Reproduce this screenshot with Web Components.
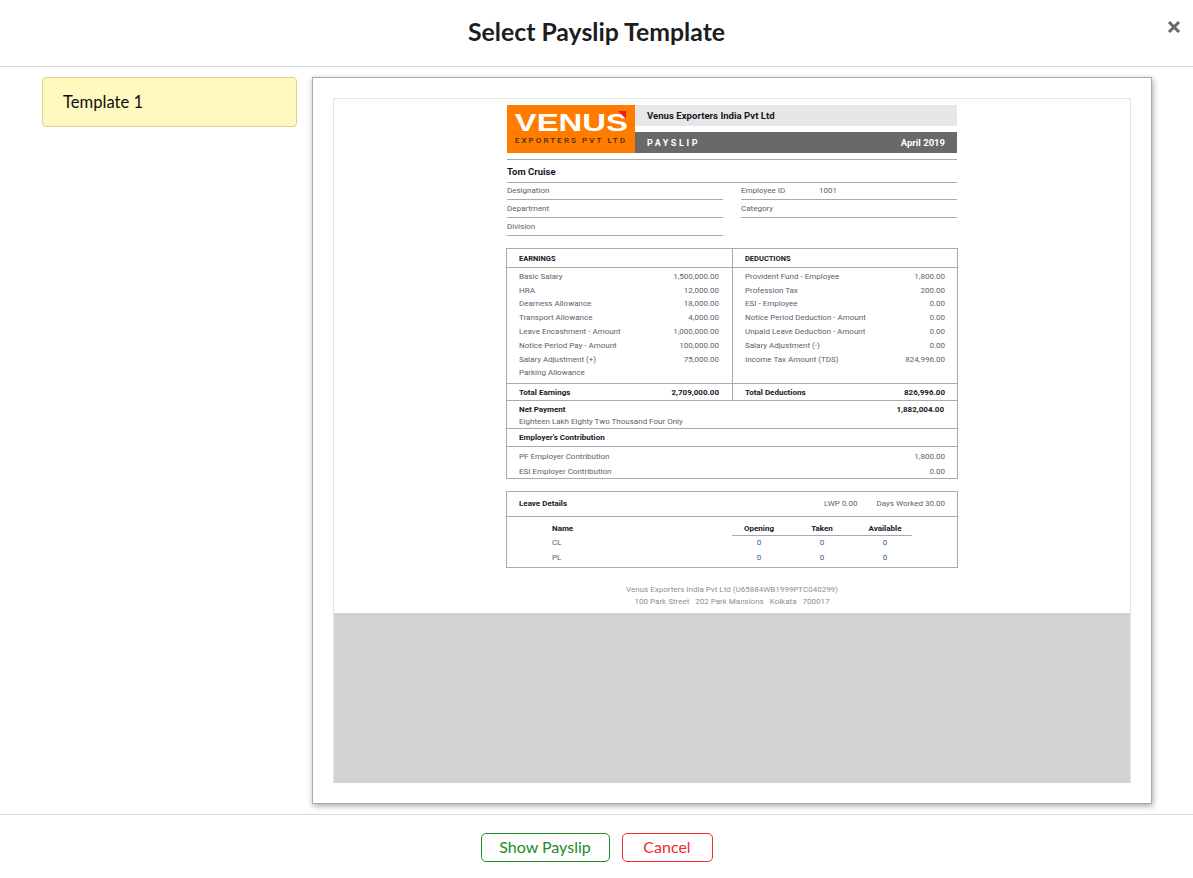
<!DOCTYPE html>
<html>
<head>
<meta charset="utf-8">
<title>Select Payslip Template</title>
<style>
    html, body { margin: 0; padding: 0; background: #fff; }
    body { font-family: Lato, "Liberation Sans", sans-serif; }
</style>
</head>
<body>
<template-dialog>
    <span slot="title">Select Payslip Template</span>
    <template-item slot="list">Template 1</template-item>
    <payslip-preview slot="preview"></payslip-preview>
    <dialog-button slot="actions" kind="ok">Show Payslip</dialog-button>
    <dialog-button slot="actions" kind="cancel">Cancel</dialog-button>
</template-dialog>

<script>
const dialogTemplate = document.createElement('template');
dialogTemplate.innerHTML = `
    <style>
        :host { display: flex; flex-direction: column; width: 1193px; height: 878px; overflow: hidden; }
        header {
            position: relative;
            display: flex;
            align-items: center;
            justify-content: center;
            height: 67px;
            padding-bottom: 3px;
            border-bottom: 1px solid #d6dbe1;
            font-size: 24.8px;
            font-weight: 700;
            color: #1d1d1d;
            box-sizing: border-box;
        }
        .close { position: absolute; top: 20px; right: 12px; width: 14px; height: 14px; }
        main {
            display: flex;
            align-items: flex-start;
            gap: 15px;
            height: 748px;
            padding: 10px 41px 0 42px;
            box-sizing: border-box;
            border-bottom: 1px solid #d6dbe1;
        }
        footer { display: flex; justify-content: center; gap: 12px; padding-top: 18px; }
    </style>
    <header>
        <slot name="title"></slot>
        <svg class="close" viewBox="0 0 14 14"><path d="M2 2 L12 12 M12 2 L2 12" stroke="#666" stroke-width="3" fill="none"/></svg>
    </header>
    <main>
        <slot name="list"></slot>
        <slot name="preview"></slot>
    </main>
    <footer><slot name="actions"></slot></footer>
`;

class TemplateDialog extends HTMLElement {
    constructor() {
        super();
        this.attachShadow({ mode: 'open' });
        this.shadowRoot.appendChild(dialogTemplate.content.cloneNode(true));
    }
}

const itemTemplate = document.createElement('template');
itemTemplate.innerHTML = `
    <style>
        :host {
            display: flex;
            align-items: center;
            box-sizing: border-box;
            width: 255px;
            height: 50px;
            padding: 0 0 0 20px;
            background: #fff9c0;
            border: 1px solid #e5cb8e;
            border-radius: 4px;
            font-size: 16.6px;
            color: #111;
        }
    </style>
    <slot></slot>
`;

class TemplateItem extends HTMLElement {
    constructor() {
        super();
        this.attachShadow({ mode: 'open' });
        this.shadowRoot.appendChild(itemTemplate.content.cloneNode(true));
    }
}

const buttonTemplate = document.createElement('template');
buttonTemplate.innerHTML = `
    <style>
        :host {
            display: flex;
            align-items: center;
            justify-content: center;
            box-sizing: border-box;
            height: 29px;
            padding-bottom: 2px;
            border: 1px solid currentColor;
            border-radius: 5px;
            font-size: 16px;
            background: #fff;
        }
        :host([kind="ok"]) { width: 129px; color: #228b22; }
        :host([kind="cancel"]) { width: 91px; color: #f42a2a; }
    </style>
    <slot></slot>
`;

class DialogButton extends HTMLElement {
    constructor() {
        super();
        this.attachShadow({ mode: 'open' });
        this.shadowRoot.appendChild(buttonTemplate.content.cloneNode(true));
    }
}

const earnings = [
    ['Basic Salary', '1,500,000.00'], ['HRA', '12,000.00'], ['Dearness Allowance', '18,000.00'],
    ['Transport Allowance', '4,000.00'], ['Leave Encashment - Amount', '1,000,000.00'],
    ['Notice Period Pay - Amount', '100,000.00'], ['Salary Adjustment (+)', '75,000.00'], ['Parking Allowance', '']
];
const deductions = [
    ['Provident Fund - Employee', '1,800.00'], ['Profession Tax', '200.00'], ['ESI - Employee', '0.00'],
    ['Notice Period Deduction - Amount', '0.00'], ['Unpaid Leave Deduction - Amount', '0.00'],
    ['Salary Adjustment (-)', '0.00'], ['Income Tax Amount (TDS)', '824,996.00']
];

function amountRows(rows) {
    return rows.map(([name, value]) => `<div class="row"><span>${name}</span><span>${value}</span></div>`).join('');
}

const previewTemplate = document.createElement('template');
previewTemplate.innerHTML = `
    <style>
        :host {
            display: block;
            box-sizing: border-box;
            width: 840px;
            height: 727px;
            padding: 20px;
            background: #fff;
            border: 1px solid #a9a9a9;
            box-shadow: 1px 2px 6px rgba(0, 0, 0, .35);
        }
        .sheet {
            box-sizing: border-box;
            height: 685px;
            display: flex;
            flex-direction: column;
            border: 1px solid #e6e6e6;
            border-bottom: 0;
        }
        .page {
            height: 514px;
            box-sizing: border-box;
            padding-top: 6px;
            display: flex;
            flex-direction: column;
            align-items: center;
            font: 8px/12px Roboto, "Liberation Sans", sans-serif;
            color: #5a6270;
            flex: none;
        }
        .blank { flex: 1; background: #d2d2d2; }
        .top { width: 450px; display: flex; height: 48px; }
        .logo {
            position: relative;
            width: 128px;
            background: #ff7c00;
            display: flex;
            flex-direction: column;
            align-items: center;
            flex: none;
            overflow: hidden;
        }
        .logo b {
            font: 700 24px/24px "Liberation Sans", sans-serif;
            color: #fff;
            margin-top: 6px;
            transform: scaleX(1.37);
        }
        .logo i {
            font: 500 8px/12px Roboto, sans-serif;
            letter-spacing: 2.1px;
            color: #4a2a08;
            white-space: nowrap;
        }
        .logo svg { position: absolute; top: 6px; left: 111px; width: 8px; height: 8px; }
        .bands { flex: 1; display: flex; flex-direction: column; justify-content: space-between; }
        .band1 { height: 21px; background: #e7e7e7; padding-left: 12px; display: flex; align-items: center; font-size: 9.6px; font-weight: 700; color: #15181f; }
        .band2 { height: 21px; background: #696969; padding: 0 12px; display: flex; align-items: center; justify-content: space-between; color: #fff; font-size: 9.5px; font-weight: 700; }
        .band2 span:first-child { font-size: 9px; letter-spacing: 2.6px; }
        .who { width: 450px; margin-top: 6px; border-top: 1px solid #aaa; }
        .who .name { height: 20px; padding-top: 2px; display: flex; align-items: center; font-size: 9.5px; font-weight: 700; color: #15181f; border-bottom: 1px solid #aaa; }
        .info { display: flex; justify-content: space-between; }
        .info > div { width: 216px; }
        .info .cell { height: 17px; display: flex; align-items: center; border-bottom: 1px solid #aaa; }
        .info .cell:first-child { height: 16px; }
        .info .cell span:first-child { width: 78px; }
        .box { box-sizing: border-box; width: 452px; border: 1px solid #aaa; }
        .pay { margin-top: 12px; }
        .cols { display: grid; grid-template-columns: 225px 1fr; border-bottom: 1px solid #aaa; }
        .cols > div + div { border-left: 1px solid #aaa; }
        .cols > div { padding: 0 13px 0 12px; }
        .cols > div + div { padding-right: 12px; }
        .heads > div { height: 18px; padding-top: 1px; box-sizing: border-box; display: flex; align-items: center; color: #15181f; font-weight: 700; font-size: 7.5px; }
        .cols.body > div { padding-top: 2px; height: 115px; box-sizing: border-box; }
        .row { height: 13.8px; display: flex; align-items: center; justify-content: space-between; white-space: nowrap; }
        .totals > div { height: 16px; padding-top: 1px; box-sizing: border-box; display: flex; align-items: center; justify-content: space-between; color: #15181f; font-weight: 700; }
        .net { height: 28px; padding: 3px 13px 0 12px; box-sizing: border-box; border-bottom: 1px solid #aaa; }
        .net .row { height: 12px; }
        strong { color: #15181f; font-weight: 700; }
        .contrib { height: 17px; padding: 0 12px; display: flex; align-items: center; border-bottom: 1px solid #aaa; }
        .side { height: 31px; box-sizing: border-box; padding: 2px 12px 0; }
        .side .row { height: 15px; }
        .leave { margin-top: 12px; height: 77px; }
        .leave-head { height: 24px; padding: 0 12px; display: flex; align-items: center; justify-content: space-between; border-bottom: 1px solid #aaa; }
        .leave-head div { display: flex; gap: 19px; }
        .grid { display: grid; grid-template-columns: 180px 54px 72px 54px; padding: 5px 0 0 45px; }
        .grid > span { height: 14.5px; display: flex; align-items: center; }
        .grid .num { justify-content: center; color: #1f5c99; }
        .grid .hd { height: 13px; font-weight: 700; color: #15181f; border-bottom: 1px solid #aaa; }
        .grid .hd.lead { border-bottom: 0; }
        .grid .hd.num { color: #15181f; }
        .addr { margin-top: 16px; text-align: center; color: #8a8f98; }
    </style>
    <div class="sheet">
        <div class="page">
            <div class="top">
                <div class="logo">
                    <b>VENUS</b>
                    <i>EXPORTERS PVT LTD</i>
                    <svg viewBox="0 0 8 8"><path d="M0 0 H8 V8 Z" fill="#e8211c"/></svg>
                </div>
                <div class="bands">
                    <div class="band1">Venus Exporters India Pvt Ltd</div>
                    <div class="band2"><span>PAYSLIP</span><span>April 2019</span></div>
                </div>
            </div>
            <div class="who">
                <div class="name">Tom Cruise</div>
                <div class="info">
                    <div>
                        <div class="cell"><span>Designation</span></div>
                        <div class="cell"><span>Department</span></div>
                        <div class="cell"><span>Division</span></div>
                    </div>
                    <div>
                        <div class="cell"><span>Employee ID</span><span>1001</span></div>
                        <div class="cell"><span>Category</span></div>
                    </div>
                </div>
            </div>
            <div class="box pay">
                <div class="cols heads"><div>EARNINGS</div><div>DEDUCTIONS</div></div>
                <div class="cols body"><div>${amountRows(earnings)}</div><div>${amountRows(deductions)}</div></div>
                <div class="cols totals">
                    <div><span>Total Earnings</span><span>2,709,000.00</span></div>
                    <div><span>Total Deductions</span><span>826,996.00</span></div>
                </div>
                <div class="net">
                    <div class="row"><strong>Net Payment</strong><strong>1,882,004.00</strong></div>
                    <div class="row"><span>Eighteen Lakh Eighty Two Thousand Four Only</span></div>
                </div>
                <div class="contrib"><strong>Employer's Contribution</strong></div>
                <div class="side">
                    <div class="row"><span>PF Employer Contribution</span><span>1,800.00</span></div>
                    <div class="row"><span>ESI Employer Contribution</span><span>0.00</span></div>
                </div>
            </div>
            <div class="box leave">
                <div class="leave-head"><strong>Leave Details</strong><div><span>LWP 0.00</span><span>Days Worked 30.00</span></div></div>
                <div class="grid">
                    <span class="hd lead">Name</span><span class="hd num">Opening</span><span class="hd num">Taken</span><span class="hd num">Available</span>
                    <span>CL</span><span class="num">0</span><span class="num">0</span><span class="num">0</span>
                    <span>PL</span><span class="num">0</span><span class="num">0</span><span class="num">0</span>
                </div>
            </div>
            <div class="addr">Venus Exporters India Pvt Ltd (U65884WB1999PTC040299)<br>100 Park Street &nbsp; 202 Park Mansions &nbsp; Kolkata &nbsp; 700017</div>
        </div>
        <div class="blank"></div>
    </div>
`;

class PayslipPreview extends HTMLElement {
    constructor() {
        super();
        this.attachShadow({ mode: 'open' });
        this.shadowRoot.appendChild(previewTemplate.content.cloneNode(true));
    }
}

customElements.define('template-dialog', TemplateDialog);
customElements.define('template-item', TemplateItem);
customElements.define('dialog-button', DialogButton);
customElements.define('payslip-preview', PayslipPreview);
</script>
</body>
</html>
